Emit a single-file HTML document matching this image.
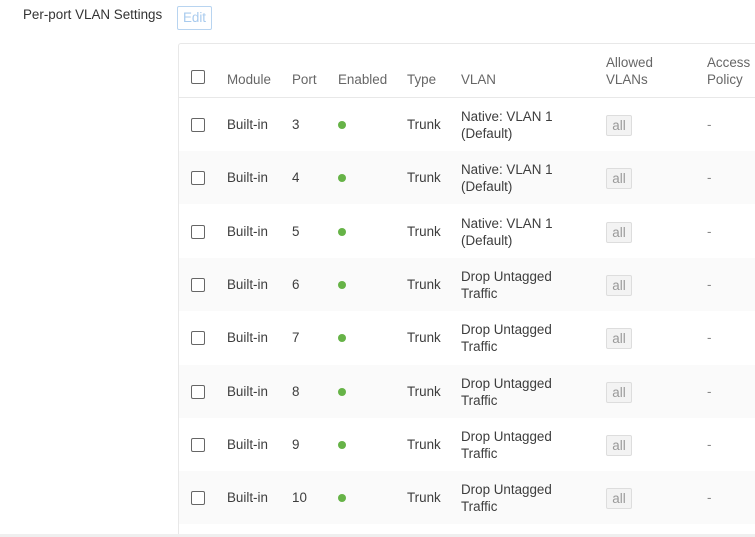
<!DOCTYPE html>
<html style="overflow:hidden"><head><style>
html,body{overflow:hidden}
body{margin:0;width:755px;height:537px;background:#fff;font-family:"Liberation Sans",sans-serif;font-size:13.4px;color:#3d3d3d;position:relative}
.title{position:absolute;left:23px;top:7px;font-size:13.4px;color:#333}
.edit{position:absolute;left:177px;top:6px;width:35px;height:24px;border:1px solid #b8d4f0;border-radius:2px;color:#a9cbee;font-size:13.4px;text-align:center;line-height:22px;box-sizing:border-box}
.box{position:absolute;left:178px;top:43px;width:600px;height:490px;border:1px solid #e8e8e8;border-bottom:none;border-radius:3px 3px 0 0}
.hdr{position:absolute;left:178px;top:43px;width:600px;height:54px;border-bottom:1px solid #e8e8e8;color:#666}
.row{position:absolute;left:179px;width:600px;height:53px}
.g{background:#fafafa}
.cell{position:absolute;line-height:17px}
.cb{position:absolute;left:12px;width:12px;height:12px;border:1px solid #666;border-radius:2px;background:#fff}
.dot{position:absolute;left:159px;width:8px;height:8px;border-radius:50%;background:#66b347}
.all{position:absolute;left:427px;width:24px;height:19px;border:1px solid #ddd;border-radius:2px;background:#f3f3f3;color:#999;text-align:center;line-height:19px}
.bot{position:absolute;left:0;top:534px;width:755px;height:3px;background:#efefef}
</style></head><body>
<div class="title">Per-port VLAN Settings</div>
<div class="edit">Edit</div>
<div class="box"></div>
<div class="hdr">
<div class="cb" style="top:27px;left:13px"></div>
<div class="cell" style="left:49px;top:28px">Module</div>
<div class="cell" style="left:114px;top:28px">Port</div>
<div class="cell" style="left:160px;top:28px">Enabled</div>
<div class="cell" style="left:229px;top:28px">Type</div>
<div class="cell" style="left:283px;top:28px">VLAN</div>
<div class="cell" style="left:428px;top:11px">Allowed<br>VLANs</div>
<div class="cell" style="left:529px;top:11px">Access<br>Policy</div>
</div>
<div id="rows"></div>
<script>
var d=[["3","Native: VLAN 1","(Default)"],["4","Native: VLAN 1","(Default)"],["5","Native: VLAN 1","(Default)"],["6","Drop Untagged","Traffic"],["7","Drop Untagged","Traffic"],["8","Drop Untagged","Traffic"],["9","Drop Untagged","Traffic"],["10","Drop Untagged","Traffic"]];
var h="";d.forEach(function(r,i){var t=98+i*53.3;h+='<div class="row'+(i%2?' g':'')+'" style="top:'+t+'px"><div class="cb" style="top:20px"></div><div class="cell" style="left:48px;top:18px">Built-in</div><div class="cell" style="left:113px;top:18px">'+r[0]+'</div><div class="dot" style="top:23px"></div><div class="cell" style="left:228px;top:18px">Trunk</div><div class="cell" style="left:282px;top:10px">'+r[1]+'<br>'+r[2]+'</div><div class="all" style="top:17px">all</div><div class="cell" style="left:528px;top:18px;color:#888">-</div></div>';});
document.getElementById("rows").innerHTML=h;
</script>
<div class="bot"></div>
</body></html>
